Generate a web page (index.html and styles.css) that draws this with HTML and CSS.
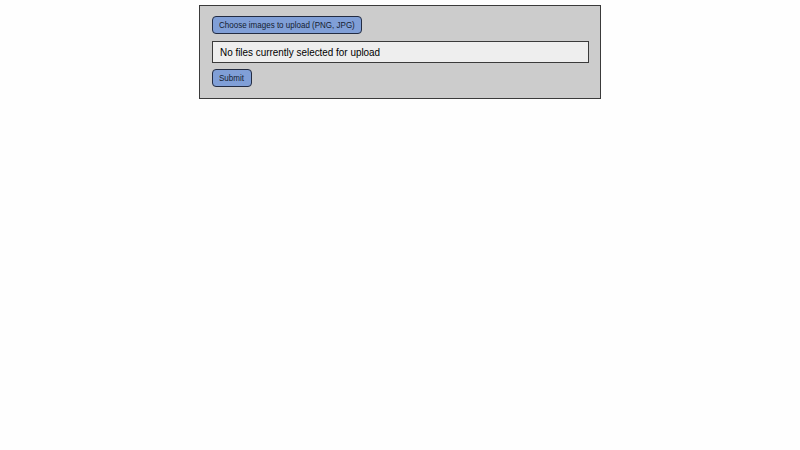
FILE: index.html
```html
<!DOCTYPE html>
<html lang="en">
<head>
<meta charset="utf-8">
<title>Upload</title>
<link rel="stylesheet" href="styles.css">
</head>
<body>
<form class="upload-form">
  <label class="btn choose-btn"><span class="narrow">Choose images to upload (PNG, JPG)</span></label>
  <div class="file-list"><span class="narrow">No files currently selected for upload</span></div>
  <button type="button" class="btn submit-btn"><span class="narrow">Submit</span></button>
</form>
</body>
</html>
```
FILE: styles.css
```css
html, body {
  margin: 0;
  padding: 0;
  background: #fefefe;
}
.upload-form {
  box-sizing: border-box;
  width: 402px;
  margin: 5px auto 0;
  padding: 10px 11px 11px 12px;
  background: #cccccc;
  border: 1px solid #3a3a3a;
  display: flex;
  flex-direction: column;
  align-items: flex-start;
}
.narrow {
  display: inline-block;
  white-space: nowrap;
  transform: scaleX(0.9);
  transform-origin: left center;
}
.btn {
  box-sizing: border-box;
  height: 18px;
  padding: 0 0 0 6px;
  border: 1px solid #232c42;
  border-radius: 4px;
  background: #809fd7;
  color: #141c30;
  font-family: "Liberation Sans", Arial, sans-serif;
  font-size: 9px;
  line-height: 16px;
  display: flex;
  align-items: center;
  overflow: hidden;
  cursor: pointer;
}
.btn .narrow {
  transform: scaleX(0.89);
}
.choose-btn {
  width: 150px;
}
.file-list {
  box-sizing: border-box;
  align-self: stretch;
  height: 22px;
  margin-top: 7px;
  padding: 0 7px;
  background: #eeeeee;
  border: 1px solid #3a3a3a;
  color: #000;
  font-family: "Liberation Sans", Arial, sans-serif;
  font-size: 11px;
  line-height: 20px;
}
.submit-btn {
  width: 40px;
  margin-top: 6px;
}
```
